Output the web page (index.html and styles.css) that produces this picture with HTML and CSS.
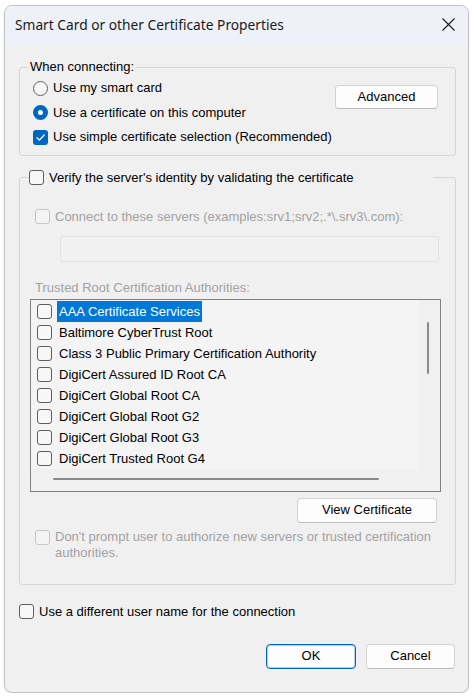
FILE: index.html
```html
<!DOCTYPE html>
<html lang="en">
<head>
<meta charset="utf-8">
<title>Smart Card or other Certificate Properties</title>
<link rel="stylesheet" href="styles.css">
</head>
<body>
<div class="window">
  <div class="titlebar">
    <span class="title">Smart Card or other Certificate Properties</span>
    <svg class="close" width="13" height="13" viewBox="0 0 13 13" aria-hidden="true">
      <path d="M0.5 0.5 L12.5 12.5 M12.5 0.5 L0.5 12.5" stroke="#1b1b1b" stroke-width="1.1" fill="none"/>
    </svg>
  </div>
  <div class="content">
    <fieldset class="group g1">
      <legend class="legend-text">When connecting:</legend>
      <div class="g1-body">
        <div class="opt"><span class="radio"></span>Use my smart card</div>
        <button class="btn advanced">Advanced</button>
        <div class="opt"><span class="radio on"></span>Use a certificate on this computer</div>
        <div class="opt"><span class="check on"><svg width="15" height="15" viewBox="0 0 15 15"><path d="M4 7.8 L6.4 10.1 L11.2 5" stroke="#fff" stroke-width="1.3" fill="none" stroke-linecap="round" stroke-linejoin="round"/></svg></span>Use simple certificate selection (Recommended)</div>
      </div>
    </fieldset>

    <fieldset class="group g2">
      <legend class="legend-check"><span class="check"></span>Verify the server's identity by validating the certificate</legend>
      <div class="g2-body">
        <div class="opt disabled"><span class="check dis"></span>Connect to these servers (examples:srv1;srv2;.*\.srv3\.com):</div>
        <div class="textbox"></div>
        <div class="label disabled">Trusted Root Certification Authorities:</div>
        <div class="listbox">
          <div class="list-main">
            <ul class="items">
              <li class="item"><span class="check"></span><span class="name selected">AAA Certificate Services</span></li>
              <li class="item"><span class="check"></span><span class="name">Baltimore CyberTrust Root</span></li>
              <li class="item"><span class="check"></span><span class="name">Class 3 Public Primary Certification Authority</span></li>
              <li class="item"><span class="check"></span><span class="name">DigiCert Assured ID Root CA</span></li>
              <li class="item"><span class="check"></span><span class="name">DigiCert Global Root CA</span></li>
              <li class="item"><span class="check"></span><span class="name">DigiCert Global Root G2</span></li>
              <li class="item"><span class="check"></span><span class="name">DigiCert Global Root G3</span></li>
              <li class="item"><span class="check"></span><span class="name">DigiCert Trusted Root G4</span></li>
            </ul>
            <div class="vscroll"><div class="vthumb"></div></div>
          </div>
          <div class="hscroll"><div class="hthumb"></div></div>
        </div>
        <div class="btn-row"><button class="btn view">View Certificate</button></div>
        <div class="opt disabled multi"><span class="check dis"></span><span>Don't prompt user to authorize new servers or trusted certification<br>authorities.</span></div>
      </div>
    </fieldset>

    <div class="opt standalone"><span class="check"></span>Use a different user name for the connection</div>

    <div class="footer">
      <button class="btn ok">OK</button>
      <button class="btn cancel">Cancel</button>
    </div>
  </div>
</div>
</body>
</html>
```

FILE: styles.css
```css
html, body {
  margin: 0;
  padding: 0;
  background: #ffffff;
}

body {
  font-family: "Liberation Sans", Arial, sans-serif;
  font-size: 13px;
  line-height: 16px;
  color: #000;
}

.btn {
  box-sizing: border-box;
  margin: 0;
  padding: 0;
  font: inherit;
  color: #000;
  background: #fdfdfd;
  border: 1px solid #d2d2d2;
  border-bottom-color: #bdbdbd;
  border-radius: 4px;
}

.window {
  box-sizing: border-box;
  width: 465px;
  height: 688px;
  margin: 5px 0 0 4px;
  border: 1px solid #c3c3c3;
  border-radius: 8px;
  background: #f0f0f0;
  overflow: hidden;
  box-shadow: 0 1px 3px rgba(0, 0, 0, 0.08);
}

.titlebar {
  box-sizing: border-box;
  height: 40px;
  display: flex;
  align-items: center;
  justify-content: space-between;
  padding: 0 13px 4px 10px;
  background: #eef2f8;
}

.title {
  font-family: "Noto Sans", "Open Sans", sans-serif;
  font-size: 13.75px;
  line-height: 19px;
  color: #1a1a1a;
}

.close {
  display: block;
}

.content {
  padding: 0 12px 0 14px;
}

.group {
  margin: 0;
  padding: 0;
  min-width: 0;
  border: 1px solid #d6d6d6;
  border-radius: 3px;
}

.g1 {
  margin-top: 13px;
}

.g2 {
  margin-top: 14px;
}

.legend-text {
  margin-left: 8px;
  padding: 0 2px;
  line-height: 16px;
}

.legend-check {
  box-sizing: border-box;
  width: 404px;
  margin-left: 9px;
  padding: 0;
  display: flex;
  align-items: center;
  gap: 5px;
  height: 16px;
}

.g1-body {
  display: grid;
  grid-template-columns: 1fr auto;
  grid-template-rows: 24.5px 24.5px 24.5px;
  padding: 1px 17px 5px 13px;
}

.g1-body .opt {
  grid-column: 1;
}

.g1-body .advanced {
  grid-column: 2;
  grid-row: 1 / span 2;
  align-self: start;
  margin-top: 9px;
  width: 103px;
  height: 24px;
}

.opt {
  display: flex;
  align-items: center;
  gap: 5px;
  line-height: 16px;
}

.opt.disabled,
.label.disabled {
  color: #a2a2a2;
}

.radio,
.check {
  box-sizing: border-box;
  flex: none;
  display: block;
  width: 15px;
  height: 15px;
  border: 1px solid #5e5e5e;
  background: #f7f7f7;
}

.radio {
  border-radius: 50%;
}

.radio.on {
  border: 5px solid #0067c0;
  background: #ffffff;
}

.check {
  border-radius: 3px;
}

.check.on {
  border: none;
  background: #0067c0;
}

.check.on svg {
  display: block;
}

.check.dis {
  border-color: #c6c6c6;
  background: #f4f4f4;
}

.g2-body {
  padding: 23px 16px 23px 15px;
}

.textbox {
  box-sizing: border-box;
  height: 26px;
  margin: 11px 0 0 25px;
  border: 1px solid #e2e2e2;
  border-radius: 2px;
  background: #f1f1f1;
}

.label {
  margin-top: 18px;
  line-height: 16px;
}

.listbox {
  box-sizing: border-box;
  height: 193px;
  margin: 3px -2px 0 -5px;
  border: 1px solid #808080;
  background: #f0f0f0;
}

.list-main {
  display: flex;
  height: 169px;
}

.items {
  box-sizing: border-box;
  width: 387px;
  margin: 0;
  padding: 1px 0 0 6px;
  list-style: none;
  background: #f4f4f4;
}

.item {
  display: flex;
  align-items: center;
  height: 21px;
}

.item .check {
  margin-right: 5px;
}

.name {
  padding: 0 2px;
  line-height: 21px;
  white-space: nowrap;
}

.name.selected {
  background: #0078d7;
  color: #ffffff;
}

.vscroll {
  flex: 1;
  padding: 22px 0 0 9px;
}

.vthumb {
  width: 2px;
  height: 52px;
  border-radius: 1px;
  background: #898989;
}

.hscroll {
  box-sizing: border-box;
  height: 22px;
  padding: 9px 0 0 22px;
}

.hthumb {
  width: 326px;
  height: 2px;
  border-radius: 1px;
  background: #898989;
}

.btn-row {
  display: flex;
  justify-content: flex-end;
  margin: 6px 2px 0 0;
}

.btn-row .view {
  width: 140px;
  height: 25px;
}

.multi {
  margin-top: 6px;
  align-items: flex-start;
}

.multi .check {
  margin-top: 1px;
}

.standalone {
  margin-top: 19px;
}

.footer {
  display: flex;
  justify-content: flex-end;
  gap: 10px;
  margin-top: 24px;
  padding-right: 1px;
}

.footer .btn {
  height: 25px;
}

.footer .ok {
  width: 90px;
  border: 1px solid #0067c0;
  box-shadow: inset 0 0 0 1px rgba(0, 103, 192, 0.3);
}

.footer .cancel {
  width: 89px;
}
```
